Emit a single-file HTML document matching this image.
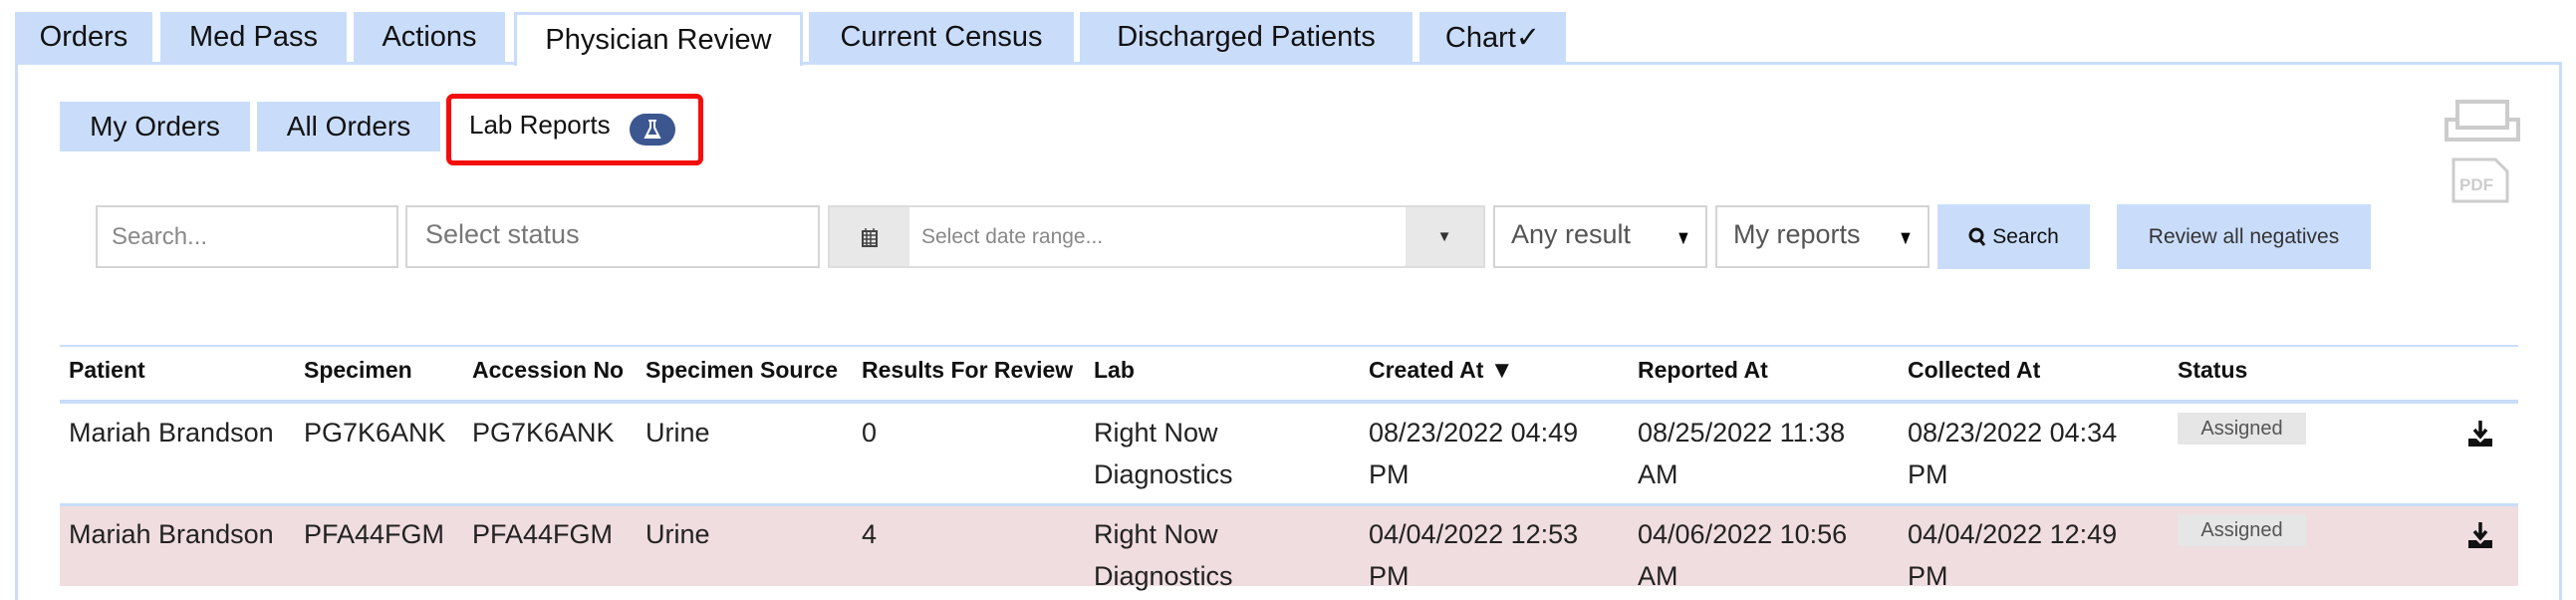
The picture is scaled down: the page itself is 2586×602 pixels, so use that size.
<!DOCTYPE html>
<html><head><meta charset="utf-8"><style>
*{margin:0;padding:0;box-sizing:border-box}
body{width:2586px;height:588px;overflow:hidden;background:#fff;font-family:"Liberation Sans",Arial,sans-serif;color:#111;position:relative}
.a{position:absolute}
.tab{position:absolute;top:12px;height:51px;background:#c9ddfb;font-size:29px;display:flex;align-items:center;justify-content:center;color:#111}
.sub{position:absolute;top:102px;height:50px;background:#c9ddfb;font-size:28px;display:flex;align-items:center;justify-content:center}
.inp{position:absolute;top:206px;height:63px;border:2px solid #d4d4d4;background:#fff;color:#777;display:flex;align-items:center}
.th{position:absolute;top:358px;font-size:23px;font-weight:bold}
.td{position:absolute;font-size:27px;line-height:42px;color:#222}
.badge{position:absolute;width:129px;height:32px;background:#e6e6e6;color:#555;font-size:20px;display:flex;align-items:center;justify-content:center}
.arr{position:absolute;right:12px;top:20px;font-size:20px;color:#000;transform:scaleX(0.8)}
</style></head><body>
<div class="a" style="left:15px;top:62px;width:2557px;height:540px;border:3px solid #c9ddfb;border-bottom:none"></div>
<div class="tab" style="left:15px;width:138px">Orders</div>
<div class="tab" style="left:161px;width:187px">Med Pass</div>
<div class="tab" style="left:355px;width:152px">Actions</div>
<div class="tab" style="left:516px;width:290px;height:54px;background:#fff;border:3px solid #c9ddfb;border-bottom:none">Physician Review</div>
<div class="tab" style="left:812px;width:266px">Current Census</div>
<div class="tab" style="left:1084px;width:334px">Discharged Patients</div>
<div class="tab" style="left:1425px;width:147px">Chart✓</div>

<div class="sub" style="left:60px;width:191px">My Orders</div>
<div class="sub" style="left:258px;width:184px">All Orders</div>
<div class="a" style="left:448px;top:94px;width:258px;height:72px;border:5px solid #f40d0d;border-radius:7px;background:#fff"></div>
<div class="a" style="left:471px;top:110px;font-size:26px;color:#111">Lab Reports</div>
<div class="a" style="left:632px;top:114px;width:46px;height:32px;border-radius:16px;background:#3c5690">
<svg width="46" height="32" viewBox="0 0 46 32"><path d="M19 7h8M21 7v7l-5 10h14l-5-10V7" fill="none" stroke="#fff" stroke-width="2"/><path d="M18 21h10l2 3H16z" fill="#fff"/></svg></div>

<svg class="a" style="left:2454px;top:100px" width="76" height="42" viewBox="0 0 76 42"><rect x="2" y="20" width="72" height="20" fill="none" stroke="#ccc" stroke-width="4"/><rect x="13" y="2" width="50" height="26" fill="#fff" stroke="#ccc" stroke-width="4"/><line x1="13" y1="28" x2="63" y2="28" stroke="#ccc" stroke-width="4"/></svg>
<svg class="a" style="left:2461px;top:158px" width="60" height="46" viewBox="0 0 60 46"><path d="M2 2h42l12 12v30H2z" fill="none" stroke="#ccc" stroke-width="3"/><text x="8" y="33" font-family="Liberation Sans" font-weight="bold" font-size="17" fill="#ccc">PDF</text></svg>

<div class="inp" style="left:96px;width:304px;padding-left:14px;font-size:24px;color:#888">Search...</div>
<div class="inp" style="left:407px;width:416px;padding-left:18px;font-size:27px;align-items:flex-start;padding-top:12px">Select status</div>
<div class="inp" style="left:831px;width:660px;padding:0;border-color:#ddd">
 <div style="width:80px;height:100%;background:#e8e8e8;display:flex;align-items:center;justify-content:center"><svg width="16" height="20" viewBox="0 0 16 20"><rect x="1" y="4" width="14" height="15" fill="none" stroke="#444" stroke-width="2"/><path d="M1 8h14M1 12h14M1 16h14M5 4v15M9 4v15M4 1v4M12 1v4" stroke="#444" stroke-width="1.5"/></svg></div>
 <div style="flex:1;padding-left:12px;font-size:21px;color:#888">Select date range...</div>
 <div style="width:78px;height:100%;background:#e8e8e8;display:flex;align-items:center;justify-content:center;font-size:15px;color:#333">▼</div>
</div>
<div class="inp" style="left:1499px;width:215px;padding-left:16px;font-size:27px;color:#555;align-items:flex-start;padding-top:12px">Any result<span class="arr">▼</span></div>
<div class="inp" style="left:1722px;width:215px;padding-left:16px;font-size:27px;color:#555;align-items:flex-start;padding-top:12px">My reports<span class="arr">▼</span></div>
<div class="a" style="left:1945px;top:205px;width:153px;height:65px;background:#c9ddfb;font-size:21px;display:flex;align-items:center;justify-content:center;color:#111"><svg width="18" height="20" viewBox="0 0 18 20" style="margin-right:6px"><circle cx="8" cy="8" r="6" fill="none" stroke="#111" stroke-width="3"/><path d="M12 13l4 5" stroke="#111" stroke-width="3"/></svg>Search</div>
<div class="a" style="left:2125px;top:205px;width:255px;height:65px;background:#c9ddfb;font-size:21px;display:flex;align-items:center;justify-content:center;color:#333">Review all negatives</div>

<div class="a" style="left:60px;top:346px;width:2468px;height:2px;background:#c9ddfb"></div>
<div class="th" style="left:69px">Patient</div>
<div class="th" style="left:305px">Specimen</div>
<div class="th" style="left:474px">Accession No</div>
<div class="th" style="left:648px">Specimen Source</div>
<div class="th" style="left:865px">Results For Review</div>
<div class="th" style="left:1098px">Lab</div>
<div class="th" style="left:1374px">Created At <span style="font-size:24px">▼</span></div>
<div class="th" style="left:1644px">Reported At</div>
<div class="th" style="left:1915px">Collected At</div>
<div class="th" style="left:2186px">Status</div>
<div class="a" style="left:60px;top:401px;width:2468px;height:4px;background:#c9ddfb"></div>

<div class="td" style="left:69px;top:413px">Mariah Brandson</div>
<div class="td" style="left:305px;top:413px">PG7K6ANK</div>
<div class="td" style="left:474px;top:413px">PG7K6ANK</div>
<div class="td" style="left:648px;top:413px">Urine</div>
<div class="td" style="left:865px;top:413px">0</div>
<div class="td" style="left:1098px;top:413px">Right Now<br>Diagnostics</div>
<div class="td" style="left:1374px;top:413px">08/23/2022 04:49<br>PM</div>
<div class="td" style="left:1644px;top:413px">08/25/2022 11:38<br>AM</div>
<div class="td" style="left:1915px;top:413px">08/23/2022 04:34<br>PM</div>
<div class="badge" style="left:2186px;top:414px">Assigned</div>
<svg class="a" style="left:2477px;top:421px" width="26" height="28" viewBox="0 0 26 28"><path d="M13 1v15M7 10l6 7 6-7" fill="none" stroke="#111" stroke-width="3.5"/><path d="M1 19h8l4 4 4-4h8v8H1z" fill="#111"/></svg>

<div class="a" style="left:60px;top:505px;width:2468px;height:3px;background:#c9ddfb"></div>
<div class="a" style="left:60px;top:508px;width:2468px;height:80px;background:#f0dddf"></div>
<div class="td" style="left:69px;top:515px">Mariah Brandson</div>
<div class="td" style="left:305px;top:515px">PFA44FGM</div>
<div class="td" style="left:474px;top:515px">PFA44FGM</div>
<div class="td" style="left:648px;top:515px">Urine</div>
<div class="td" style="left:865px;top:515px">4</div>
<div class="td" style="left:1098px;top:515px">Right Now<br>Diagnostics</div>
<div class="td" style="left:1374px;top:515px">04/04/2022 12:53<br>PM</div>
<div class="td" style="left:1644px;top:515px">04/06/2022 10:56<br>AM</div>
<div class="td" style="left:1915px;top:515px">04/04/2022 12:49<br>PM</div>
<div class="badge" style="left:2186px;top:516px">Assigned</div>
<svg class="a" style="left:2477px;top:523px" width="26" height="28" viewBox="0 0 26 28"><path d="M13 1v15M7 10l6 7 6-7" fill="none" stroke="#111" stroke-width="3.5"/><path d="M1 19h8l4 4 4-4h8v8H1z" fill="#111"/></svg>
</body></html>
